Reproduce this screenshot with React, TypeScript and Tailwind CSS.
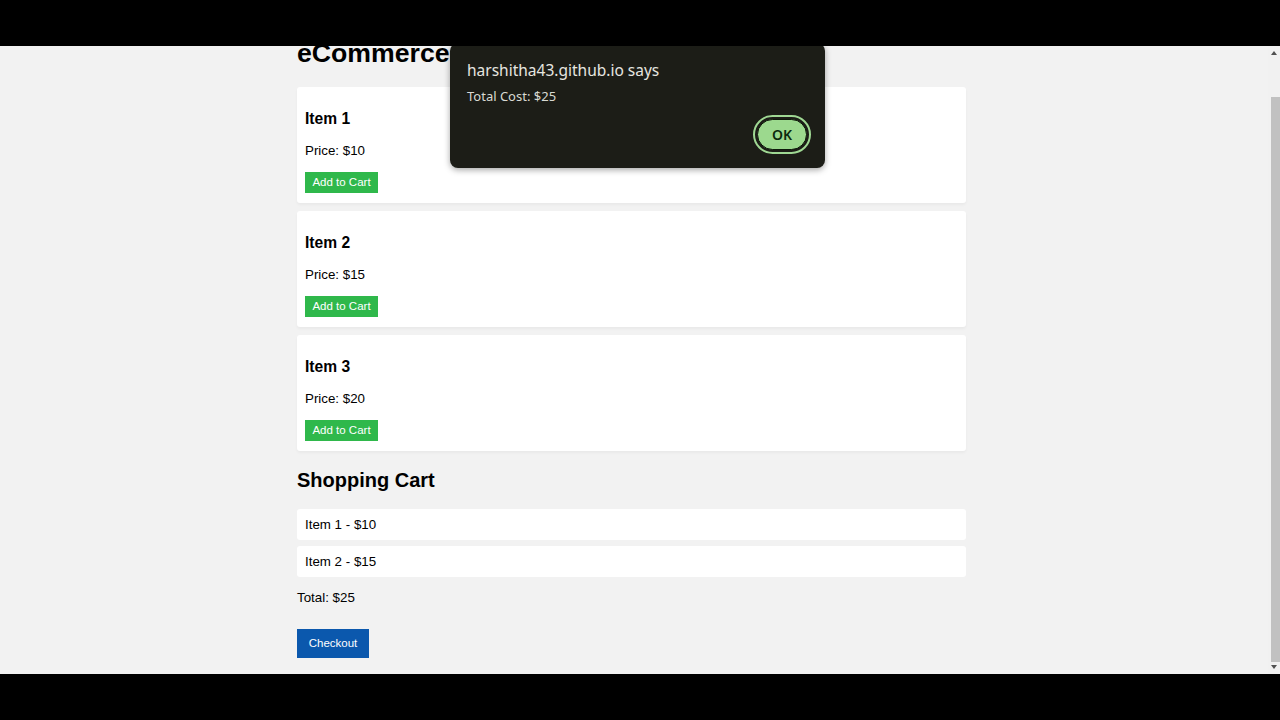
import React from 'react';

const items = [
  { name: 'Item 1', price: 10 },
  { name: 'Item 2', price: 15 },
  { name: 'Item 3', price: 20 },
];

const cart = [
  { name: 'Item 1', price: 10 },
  { name: 'Item 2', price: 15 },
];

function ItemCard({ name, price }: { name: string; price: number }) {
  return (
    <div className="flex h-[116px] flex-col items-start rounded-[3px] bg-white px-2 pt-2 shadow-[0_2px_3px_rgba(0,0,0,0.04)]">
      <h3 className="mt-[15px] text-[15.6px] font-bold leading-[18px]">{name}</h3>
      <p className="mt-[15px] text-[13.33px] leading-[16px]">Price: ${price}</p>
      <button className="mt-[13px] h-[21px] w-[73px] bg-[#2fb84b] text-[11.5px] text-white">Add to Cart</button>
    </div>
  );
}

function AlertDialog() {
  return (
    <div
      className="absolute left-[450px] top-[-3px] flex h-[125px] w-[375px] flex-col rounded-lg bg-[#1c1d17] pl-[17px] pr-[14px] pt-[16px] shadow-[0_2px_6px_rgba(0,0,0,0.35)]"
      style={{ fontFamily: '"Noto Sans", sans-serif' }}
    >
      <div className="text-[15.5px] leading-[22px] text-[#e6e6e0]">harshitha43.github.io says</div>
      <div className="mt-[6px] text-[13px] leading-[18px] text-[#d9dad3]">Total Cost: $25</div>
      <div className="mt-[10px] flex justify-end">
        <div className="rounded-full border-2 border-[#9fd893] p-[2px]">
          <button className="flex h-[31px] w-[50px] items-center justify-center rounded-full border-[1.5px] border-[#0e1a0b] bg-[#9cd98e] text-[14px] font-semibold text-[#0d2a0d]">
            OK
          </button>
        </div>
      </div>
    </div>
  );
}

export default function App() {
  const total = cart.reduce((s, c) => s + c.price, 0);
  return (
    <div className="flex h-[720px] w-[1280px] flex-col bg-black">
      <div className="h-[46px] shrink-0 bg-black" />
      <div className="relative flex h-[628px] shrink-0 overflow-hidden bg-[#f2f2f2]" style={{ fontFamily: '"Liberation Sans", Arial, sans-serif' }}>
        <div className="flex flex-1 justify-center overflow-hidden">
          <div className="ml-[-5px] flex w-[669px] flex-col">
            <h1 className="mt-[-8px] text-[26.67px] font-bold leading-[30px] text-black">eCommerce</h1>
            <div className="mt-[19px] flex flex-col gap-[8px]">
              {items.map((it) => (
                <ItemCard key={it.name} name={it.name} price={it.price} />
              ))}
            </div>
            <h2 className="mt-[18px] text-[20px] font-bold leading-[23px] text-black">Shopping Cart</h2>
            <div className="mt-[17px] flex flex-col gap-[6px]">
              {cart.map((c) => (
                <div key={c.name} className="flex h-[31px] items-center rounded-[3px] bg-white px-2 text-[13.33px]">
                  {c.name} - ${c.price}
                </div>
              ))}
            </div>
            <p className="mt-[13px] text-[13.33px] leading-[16px]">Total: ${total}</p>
            <button className="mt-[23px] h-[29px] w-[72px] bg-[#0b58ad] text-[11.5px] text-white">Checkout</button>
          </div>
        </div>
        <div className="flex w-[12px] shrink-0 flex-col items-center bg-[#f1f1f1]">
          <div className="mt-[5px] h-0 w-0 border-x-[3.5px] border-b-[4px] border-x-transparent border-b-[#505050]" />
          <div className="mt-[42px] h-[565px] w-[9px] self-end bg-[#c1c1c1]" />
          <div className="mt-[3px] h-0 w-0 border-x-[3.5px] border-t-[4px] border-x-transparent border-t-[#505050]" />
        </div>
        <AlertDialog />
      </div>
      <div className="h-[46px] shrink-0 bg-black" />
    </div>
  );
}
